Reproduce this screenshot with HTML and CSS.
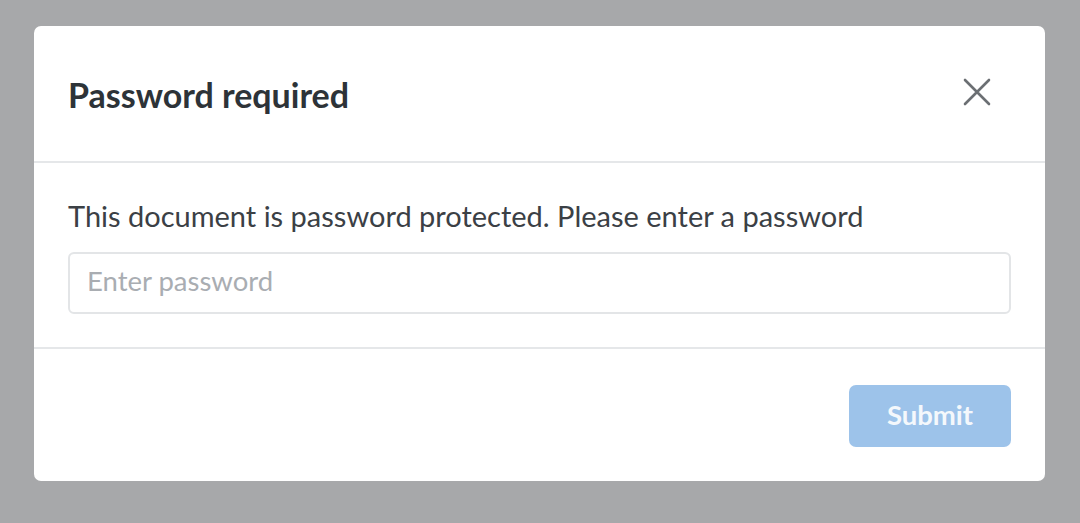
FILE: index.html
```html
<!DOCTYPE html>
<html>
<head>
<meta charset="utf-8">
<link rel="stylesheet" href="styles.css">
</head>
<body>
<div class="backdrop">
  <div class="modal">
    <div class="modal-header">
      <h2 class="modal-title">Password required</h2>
      <button class="close" aria-label="Close">
        <svg width="28" height="28" viewBox="0 0 28 28"><path d="M2 2 L26 26 M26 2 L2 26" stroke="#6b6f73" stroke-width="2.6" stroke-linecap="round" fill="none"/></svg>
      </button>
    </div>
    <div class="modal-body">
      <p class="message">This document is password protected. Please enter a password</p>
      <input class="password" type="password" placeholder="Enter password">
    </div>
    <div class="modal-footer">
      <button class="submit" disabled>Submit</button>
    </div>
  </div>
</div>
</body>
</html>
```
FILE: styles.css
```css
html, body {
  margin: 0;
  padding: 0;
  height: 100%;
}
body {
  background: #a7a8aa;
  font-family: Lato, "Open Sans", sans-serif;
}
.backdrop {
  padding: 26px 35px 0 34px;
}
.modal {
  background: #fff;
  border-radius: 7px;
  height: 455px;
  display: flex;
  flex-direction: column;
  overflow: hidden;
}
.modal-header {
  border-bottom: 2px solid #e5e7e9;
  display: flex;
  align-items: center;
  justify-content: space-between;
  padding: 0 54px 0 34px;
  box-sizing: border-box;
  height: 137px;
}
.modal-title {
  margin: 0;
  font-size: 34px;
  line-height: 40px;
  font-weight: 700;
  color: #2d3338;
  padding-top: 2px;
}
.close {
  background: none;
  border: 0;
  padding: 0;
  width: 28px;
  height: 28px;
  display: flex;
  margin-top: -4px;
}
.modal-body {
  padding: 0 34px;
  height: 186px;
  box-sizing: border-box;
  border-bottom: 2px solid #e5e7e9;
}
.message {
  margin: 37px 0 20px;
  font-size: 29px;
  color: #3b4045;
  line-height: 32px;
}
.password {
  display: block;
  width: 100%;
  height: 62px;
  box-sizing: border-box;
  border: 2px solid #e3e5e7;
  border-radius: 6px;
  padding: 0 18px 6px 17px;
  font-family: Lato, sans-serif;
  font-size: 27.5px;
  color: #3b4045;
  outline: none;
}
.password::placeholder {
  color: #a9adb2;
}
.modal-footer {
  flex: 1;
  display: flex;
  align-items: center;
  justify-content: flex-end;
  padding: 0 34px;
}
.submit {
  width: 162px;
  height: 62px;
  border: 0;
  border-radius: 7px;
  background: #9dc3ea;
  color: #f4f8fc;
  font-family: Lato, sans-serif;
  font-size: 27.5px;
  font-weight: 700;
  margin-top: 2px;
  padding: 0 0 4px;
}
```
